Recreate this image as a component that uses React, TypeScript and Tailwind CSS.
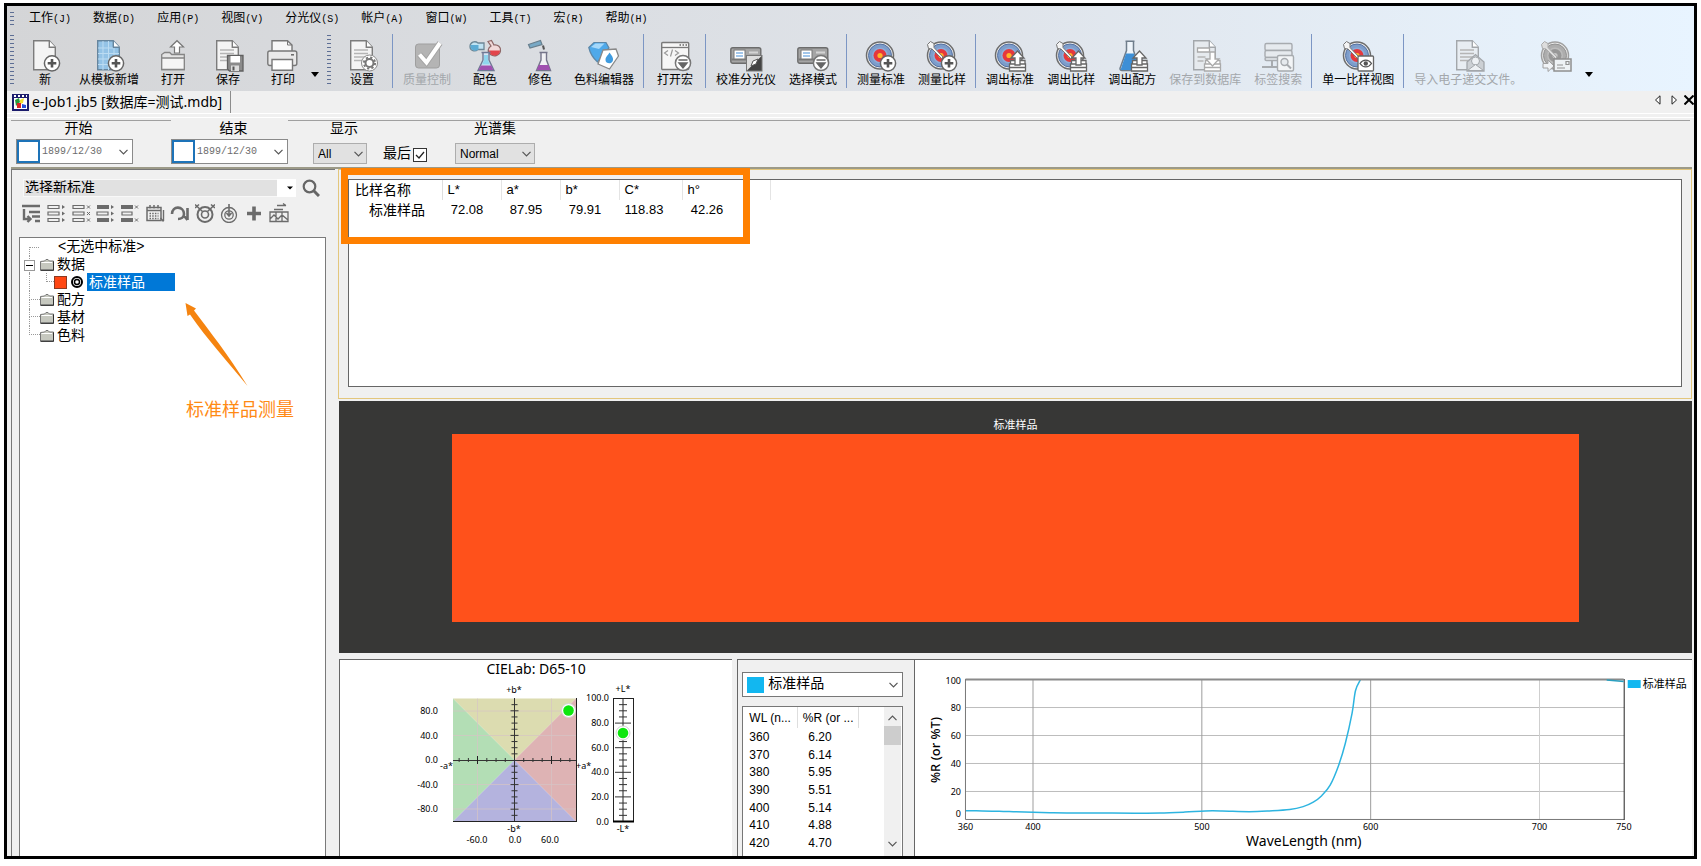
import { FC, Fragment, ReactNode, useState } from "react";

interface ToolItem {
	label: string;
	icon: ReactNode;
	disabled?: boolean;
}

const MENU_ITEMS: { text: string; hotkey: string }[] = [
	{ text: "工作", hotkey: "J" },
	{ text: "数据", hotkey: "D" },
	{ text: "应用", hotkey: "P" },
	{ text: "视图", hotkey: "V" },
	{ text: "分光仪", hotkey: "S" },
	{ text: "帐户", hotkey: "A" },
	{ text: "窗口", hotkey: "W" },
	{ text: "工具", hotkey: "T" },
	{ text: "宏", hotkey: "R" },
	{ text: "帮助", hotkey: "H" },
];

const LAB_COLUMNS = [
	{ name: "L*", value: "72.08", width: "w-[59px]" },
	{ name: "a*", value: "87.95", width: "w-[59px]" },
	{ name: "b*", value: "79.91", width: "w-[59px]" },
	{ name: "C*", value: "118.83", width: "w-[63px]" },
	{ name: "h°", value: "42.26", width: "w-[88px]" },
];

const SPECTRUM_ROWS = [
	["360", "6.20"],
	["370", "6.14"],
	["380", "5.95"],
	["390", "5.51"],
	["400", "5.14"],
	["410", "4.88"],
	["420", "4.70"],
];

// [wavelength, reflectance]
const CURVE: [number, number][] = [
	[360, 6.2],
	[370, 6.14],
	[380, 5.95],
	[390, 5.51],
	[400, 5.14],
	[410, 4.88],
	[420, 4.7],
	[440, 4.6],
	[460, 4.5],
	[475, 4.6],
	[490, 5.3],
	[502, 6.1],
	[512, 6.1],
	[528, 5.6],
	[540, 6.1],
	[552, 7.1],
	[560, 9.2],
	[566, 12.4],
	[571, 17],
	[576, 24.5],
	[581, 38.6],
	[585, 54.5],
	[589, 76],
	[591, 92],
	[594, 100],
];

/* ---------- icon pieces ---------- */

const Icon: FC<{ children: ReactNode }> = ({ children }) => (
	<svg
		viewBox="0 0 32 32"
		className="w-8 h-8 overflow-visible"
		fill="none"
		aria-hidden="true"
	>
		{children}
	</svg>
);

const Doc: FC<{ fill?: string; stroke?: string }> = ({
	fill = "#f4f4f4",
	stroke = "#7c7c7c",
}) => (
	<g stroke={stroke} strokeWidth="1.4">
		<path d="M4.7 .7h15.6l6 6.5v22.5H4.7z" fill={fill} />
		<path d="M20.3 .7v6.5h6" fill="#fff" />
	</g>
);

const DocLines: FC = () => (
	<path d="M8 10h14M8 13.500h14M8 17h14M8 20.500h10" stroke="#b5b5b5" strokeWidth="1.5" />
);

const PlusBadge: FC = () => (
	<g>
		<circle cx="23" cy="23.300" r="7.600" fill="#fff" stroke="#666" strokeWidth="1.500" />
		<path d="M23 19v8.600M18.700 23.300h8.600" stroke="#555" strokeWidth="2.600" />
	</g>
);

const ModeBadge: FC = () => (
	<g>
		<circle cx="24" cy="23" r="7.600" fill="#fff" stroke="#777" strokeWidth="1.500" />
		<path d="M19.500 20h9M20 23l4 4.800 4-4.800z" stroke="#666" strokeWidth="1.400" fill="#666" />
	</g>
);

const Target: FC<{ gray?: boolean }> = ({ gray }) => (
	<g>
		<circle cx="15" cy="15.500" r="13.500" fill="#eee" stroke={gray ? "#a0a0a0" : "#6d6d6d"} strokeWidth="1.500" />
		<circle cx="15" cy="15.500" r="11.500" fill={gray ? "#adadad" : "#7d9dcb"} stroke={gray ? "#919191" : "#5470a0"} />
		<circle cx="15" cy="15.500" r="8" fill={gray ? "#bcbcbc" : "#8eacd8"} />
		<circle cx="15" cy="15.500" r="6.500" fill={gray ? "#979797" : "#e5383d"} />
		<circle cx="15" cy="15.500" r="2.600" fill={gray ? "#c8c8c8" : "#ffb429"} />
	</g>
);

const Dart: FC<{ gray?: boolean }> = ({ gray }) => (
	<g>
		<path
			d="M1.500 4.500 4.500 1.500l3.500 2v4l9 9.500-1.500 1.500-9.500-9.500-3.500-.5z"
			fill={gray ? "#ddd" : "#f4f4f4"}
			stroke={gray ? "#aaa" : "#777"}
		/>
	</g>
);

const RecallBadge: FC<{ gray?: boolean; down?: boolean }> = ({ gray, down }) => (
	<g fill="#fff" stroke={gray ? "#aaa" : "#666"} strokeWidth="1.300">
		<path d="M15.500 27.500h16v3.500h-16zM15.500 24h16v3.500h-16zM16.500 20.500h14.500V24H16.500z" />
		{down ? (
			<path d="M21 12h5v7h4l-6.500 7-6.500-7h4z" />
		) : (
			<path d="M21 25v-7h-4l6.500-7 6.500 7h-4v7z" />
		)}
	</g>
);

const Device: FC = () => (
	<g>
		<rect x=".8" y="7.800" width="30" height="15.500" rx="2" fill="#a5a5a5" stroke="#6c6c6c" strokeWidth="1.400" />
		<path d="M1.500 19.500h28.500" stroke="#7a7a7a" strokeWidth="2" />
		<rect x="4" y="10" width="11" height="9" fill="#fff" stroke="#777" />
		<path d="M6 13h7M6 16h7" stroke="#84b4e4" strokeWidth="1.400" />
		<path d="M19 12.500h9" stroke="#d4d4d4" strokeWidth="2" />
	</g>
);

const NewIcon = (
	<Icon>
		<Doc />
		<PlusBadge />
	</Icon>
);

const TemplateIcon = (
	<Icon>
		<Doc fill="#94c3e6" stroke="#66859d" />
		<path d="M5 8h15M5 13.500h21M5 19h21M5 24.500h21M10 1v29M15.500 1v29M21 8v22" stroke="#bcdcf2" strokeWidth="1" />
		<PlusBadge />
	</Icon>
);

const OpenIcon = (
	<Icon>
		<path d="M4.700 29.500V14.500l3-2h5l2 2h12.600v15z" fill="#e4e4e4" stroke="#858585" strokeWidth="1.300" />
		<path d="M4.700 29.500V18h22.600v11.500z" fill="#f5f5f5" stroke="#858585" strokeWidth="1.300" />
		<path d="M17.500 13V7h-4l6.500-6.300L26.500 7h-4v6z" fill="#fff" stroke="#777" strokeWidth="1.200" />
	</Icon>
);

const SaveIcon = (
	<Icon>
		<Doc />
		<DocLines />
		<path d="M15.500 15.500h15.500v15.500H17.500l-2-2z" fill="#8b8b8b" stroke="#606060" strokeWidth="1.300" />
		<path d="M18.500 16h9.500v6.500h-9.500z" fill="#fff" />
		<path d="M19 25.500h8v5.500h-8z" fill="#ddd" />
		<path d="M20.500 26.500h2v4h-2z" fill="#555" />
	</Icon>
);

const PrintIcon = (
	<Icon>
		<path d="M5 11V.7h15.500L25 5v6" fill="#f7f7f7" stroke="#777" strokeWidth="1.400" />
		<path d="M20.500.7V5H25" stroke="#777" />
		<rect x=".8" y="11" width="29" height="14.500" rx="2" fill="#e9e9e9" stroke="#777" strokeWidth="1.400" />
		<path d="M24 14.800h3" stroke="#666" strokeWidth="1.500" />
		<path d="M5 19.500h20.500v10.800H5z" fill="#fff" stroke="#777" strokeWidth="1.400" />
	</Icon>
);

const SettingsIcon = (
	<Icon>
		<Doc />
		<DocLines />
		<circle cx="23.500" cy="23" r="8" fill="#fff" stroke="#888" />
		<circle cx="23.500" cy="23" r="4" fill="#fff" stroke="#777" strokeWidth="2" />
		<circle cx="23.500" cy="23" r="5.600" stroke="#777" strokeWidth="2" strokeDasharray="2.200 2.200" />
	</Icon>
);

const QualityIcon = (
	<Icon>
		<rect x="4.500" y="4" width="24" height="24" rx="3" fill="#b4b4b4" stroke="#9f9f9f" />
		<path d="M8.500 14.500l7 8L29 3" stroke="#a4a4a4" strokeWidth="6" />
		<path d="M8.500 14.500l7 8L29 3" stroke="#fff" strokeWidth="4" />
	</Icon>
);

const MatchIcon = (
	<Icon>
		<path d="M15 3H9C6 .5 1 2 1 6.500S6 12 9 9.500h6z" fill="#bfe3f3" stroke="#6d8796" strokeWidth="1.300" />
		<path d="M1.500 5h8v4.500C6 12 1 10.500 1.500 5z" fill="#5cabd4" />
		<path d="M19 1.500l3.500-1 2.500 4.500c4-.5 7 2 6.500 6s-6 6.500-10 3.500-2-7 .5-8.500z" fill="#f2d9d9" stroke="#8d6666" strokeWidth="1.200" />
		<path d="M20 10.500h11c0 3-2.500 5-5.500 5S20 13.500 20 10.500z" fill="#e2444a" />
		<path d="M12.500 12.500h9M14 13v7L9 30.500h16L20 20v-7" fill="#d9e4f4" stroke="#707894" strokeWidth="1.400" />
		<path d="M11.800 25.500h10.500l2 4.500H9.700z" fill="#a04fb0" />
		<path d="M15 15h4v5l2 4.500h-8l2-4.500z" fill="#8fd4ee" />
	</Icon>
);

const CorrectIcon = (
	<Icon>
		<path d="M4.500 4.500l12-4 1.500 4-12 3.500z" fill="#78a9c6" stroke="#687f8d" strokeWidth="1.200" />
		<path d="M19 5.500l1 4" stroke="#555" strokeWidth="2" />
		<path d="M15.500 12.500h8M17 13v7l-4.500 10.500h14L22.500 20v-7" fill="#f1f1f5" stroke="#74748a" strokeWidth="1.400" />
		<path d="M14.700 25h9.800l1.700 5H13z" fill="#a04fb0" />
	</Icon>
);

const ColorantIcon = (
	<Icon>
		<path d="M.8 7.500L6 2.500h12L21 8 9.500 22C5 18 2 13 .8 7.500z" fill="#4fa9ea" stroke="#5c87a8" strokeWidth="1.200" />
		<path d="M3 7l4.500-3.500h9L11 9z" fill="#a5d8fa" />
		<path d="M15 10l13-1 2.500 7-9 13-11.500-5z" fill="#fff" stroke="#888" strokeWidth="1.300" />
		<path d="M21.500 12.500c3 4 4.500 6 3 9s-7 2-7-1.500 2.500-4.500 4-7.500z" fill="#3f9bdf" />
	</Icon>
);

const MacroIcon = (
	<Icon>
		<rect x="2.700" y="2.500" width="27" height="27" rx="1" fill="#f6f6f6" stroke="#7a7a7a" strokeWidth="1.400" />
		<path d="M3 7.500h26.500" stroke="#7a7a7a" strokeWidth="1.300" />
		<path d="M20.500 5h1.500M23.500 5h1.500M26.500 5h1.500" stroke="#666" strokeWidth="1.500" />
		<path d="M9 10.500l-3.500 2.500L9 15.500M13.500 9.500l-2 7M16 10.500l3.500 2.500-3.500 2.500" stroke="#999" strokeWidth="1.200" />
		<ModeBadge />
	</Icon>
);

const CalibrateIcon = (
	<Icon>
		<Device />
		<rect x="16.500" y="15.500" width="15.500" height="15.500" fill="#444" stroke="#777" />
		<path d="M17 16h14.500L17 30.500z" fill="#ddd" />
		<path d="M21 26l2-5 5-2-2 5z" fill="#fff" stroke="#555" />
	</Icon>
);

const ModeIcon = (
	<Icon>
		<Device />
		<ModeBadge />
	</Icon>
);

const RecallFormulaIcon = (
	<Icon>
		<path d="M9.500 1.200h9M10.500 1.500v9L4 28.500c0 1.500 1 2 2 2h16c1.500 0 2-1 1.500-2l-6-18v-9" fill="#eef4fa" stroke="#6f7d8b" strokeWidth="1.500" />
		<path d="M10 13.500h8l5 15.500c0 .8-.5 1-1 1H6c-1 0-1.500-.5-1-1.500z" fill="#3d8fd6" />
		<RecallBadge />
	</Icon>
);

const SaveDbIcon = (
	<Icon>
		<Doc fill="#e6eaee" stroke="#a3a7ab" />
		<path d="M8.500 8h12v4h-12z" fill="#fff" stroke="#a9a9a9" strokeWidth="1.300" />
		<path d="M8.500 17h8M8.500 21h6" stroke="#b5b5b5" strokeWidth="1.300" />
		<RecallBadge gray down />
	</Icon>
);

const TagSearchIcon = (
	<Icon>
		<g fill="#e6eaee" stroke="#a7abaf" strokeWidth="1.400">
			<rect x="3" y="3.500" width="27" height="7" rx="1.500" />
			<rect x="3" y="10.500" width="27" height="7" rx="1.500" />
			<rect x="3" y="17.500" width="27" height="3" rx="1.500" />
			<path d="M10 20.500v5.500M0 27h16" strokeWidth="2" />
			<rect x="15.500" y="15.500" width="16" height="15.500" rx="1.500" fill="#f3f5f7" />
			<circle cx="22.500" cy="22" r="3.500" />
			<path d="M25 24.500l4 4" strokeWidth="2" />
		</g>
	</Icon>
);

const SingleViewIcon = (
	<Icon>
		<Target />
		<Dart />
		<rect x="16" y="16" width="15.500" height="15" rx="1" fill="#fff" stroke="#666" strokeWidth="1.300" />
		<path d="M18 23.500c3-4.500 8.500-4.500 11.500 0-3 4.500-8.500 4.500-11.500 0z" stroke="#555" strokeWidth="1.300" />
		<circle cx="23.800" cy="23.500" r="2.200" fill="#555" />
	</Icon>
);

const ImportIcon = (
	<Icon>
		<Doc fill="#e8edf2" stroke="#a3a7ab" />
		<DocLines />
		<path d="M15 22l8.500-7.500 8.500 7.500v9H15z" fill="#ccd0d4" stroke="#a3a7ab" strokeWidth="1.300" />
		<circle cx="23.500" cy="21" r="4" fill="#eef1f4" stroke="#a3a7ab" />
		<path d="M15.500 30.500l8-6 8 6z" fill="#eef1f4" stroke="#a3a7ab" />
	</Icon>
);

const MailIcon = (
	<Icon>
		<Target gray />
		<Dart gray />
		<path d="M3 23.500h5V20l6 6-6 5.500V28H3z" fill="#f0f3f6" stroke="#a0a0a0" />
		<rect x="14" y="19" width="17" height="12" fill="#eef2f5" stroke="#8f8f8f" strokeWidth="1.500" />
		<path d="M17 25h6M17 28h8M26 21.500h3v3h-3z" stroke="#929292" strokeWidth="1.200" />
	</Icon>
);

const GROUP_FILE: ToolItem[] = [
	{ label: "新", icon: NewIcon },
	{ label: "从模板新增", icon: TemplateIcon },
	{ label: "打开", icon: OpenIcon },
	{ label: "保存", icon: SaveIcon },
	{ label: "打印", icon: PrintIcon },
];

const GROUPS: ToolItem[][] = [
	[{ label: "设置", icon: SettingsIcon }],
	[
		{ label: "质量控制", icon: QualityIcon, disabled: true },
		{ label: "配色", icon: MatchIcon },
		{ label: "修色", icon: CorrectIcon },
		{ label: "色料编辑器", icon: ColorantIcon },
	],
	[{ label: "打开宏", icon: MacroIcon }],
	[
		{ label: "校准分光仪", icon: CalibrateIcon },
		{ label: "选择模式", icon: ModeIcon },
	],
	[
		{ label: "测量标准", icon: <Icon><Target /><PlusBadge /></Icon> },
		{ label: "测量比样", icon: <Icon><Target /><Dart /><PlusBadge /></Icon> },
	],
	[
		{ label: "调出标准", icon: <Icon><Target /><RecallBadge /></Icon> },
		{ label: "调出比样", icon: <Icon><Target /><Dart /><RecallBadge /></Icon> },
		{ label: "调出配方", icon: RecallFormulaIcon },
		{ label: "保存到数据库", icon: SaveDbIcon, disabled: true },
		{ label: "标签搜索", icon: TagSearchIcon, disabled: true },
	],
	[{ label: "单一比样视图", icon: SingleViewIcon }],
	[
		{ label: "导入电子递交文件。", icon: ImportIcon, disabled: true },
		{ label: "", icon: MailIcon, disabled: true },
	],
];

// Small gray icons above the tree
const TREE_TOOLS: { name: string; art: ReactNode }[] = [
	{
		name: "层级",
		art: (
			<path d="M1 3h18M8 9h11M11 13.500h8M14 18h5M3 6v10h6M6.500 13l3 3-3 3" strokeWidth="2.400" />
		),
	},
	{
		name: "展开",
		art: (
			<>
				<path d="M2 2.500h11v3H2zM2 9h11v3H2zM2 15.500h11v3H2z" strokeWidth="1.200" />
				<path d="M16 2l3 2-3 2zM16 8.500l3 2-3 2zM16 15l3 2-3 2z" fill="#6b6b6b" stroke="none" />
			</>
		),
	},
	{
		name: "清除",
		art: (
			<>
				<path d="M2 2.500h11v3H2zM2 9h11v3H2zM2 15.500h11v3H2z" strokeWidth="1.200" />
				<path d="M16 2.500l3 3m0-3l-3 3M16 9l3 3m0-3l-3 3M16 15.500l3 3m0-3l-3 3" strokeWidth="1" />
			</>
		),
	},
	{
		name: "选中展开",
		art: (
			<>
				<path d="M2 4h12M2 17h12" strokeWidth="4" />
				<path d="M2 9h11v3H2z" strokeWidth="1.200" />
				<path d="M16 2l3 2-3 2zM16 8.500l3 2-3 2zM16 15l3 2-3 2z" fill="#6b6b6b" stroke="none" />
			</>
		),
	},
	{
		name: "选中清除",
		art: (
			<>
				<path d="M1 4h12M1 17h12" strokeWidth="4" />
				<path d="M2 9h10v3H2z" strokeWidth="1.200" />
				<path d="M15 2.500l3 3m0-3l-3 3M15 15.500l3 3m0-3l-3 3" strokeWidth="1" />
			</>
		),
	},
	{
		name: "日期",
		art: (
			<>
				<path d="M2 4.500h14v13H2zM2 7.500h14M5 2v3.500M9 2v3.500M13 2v3.500" strokeWidth="1.500" />
				<path d="M4.500 10.500h9M4.500 13h9M4.500 15.500h9" strokeWidth="1.500" strokeDasharray="1.500 1.200" />
				<path d="M18.500 7v11M15.500 15l3 3.500" strokeWidth="1.400" />
			</>
		),
	},
	{
		name: "刷新",
		art: <path d="M2 11c0-9 12-8 12 0 0 3.500-3 5-6 5M17.500 5v12M14.500 13.500l3 3.500" strokeWidth="2.600" />,
	},
	{
		name: "目标",
		art: (
			<>
				<circle cx="10" cy="11.500" r="7.500" strokeWidth="2" />
				<circle cx="10" cy="11.500" r="3.500" strokeWidth="1.600" />
				<path d="M0 1.500l7.500 7M20 1.500l-7.500 7M0 5l4-3.500M20 5l-4-3.500" strokeWidth="1.600" />
			</>
		),
	},
	{
		name: "测量",
		art: (
			<>
				<circle cx="10" cy="12" r="7.500" strokeWidth="1.300" />
				<circle cx="10" cy="12" r="4.200" strokeWidth="1.300" />
				<path d="M10 1v12M7.500 10l2.500 3 2.500-3" strokeWidth="1.600" />
			</>
		),
	},
	{ name: "新增", art: <path d="M10 3.500v14M3 10.500h14" strokeWidth="3.600" /> },
	{
		name: "曲线",
		art: (
			<path d="M1 9h18v9.500H1zM1 16l4-4 4 4 4-4 6 5M7 9v9M13 9v9M5 6.500h9M8 2.500h9M14 .5l3 2" strokeWidth="1.300" />
		),
	},
];

/* ---------- shared bits ---------- */

const Chevron: FC<{ up?: boolean }> = ({ up }) => (
	<svg
		viewBox="0 0 9 6"
		className={`w-[9px] h-[6px] ${up ? "rotate-180" : ""}`}
		fill="none"
		aria-hidden="true"
	>
		<path d="M.5 .8l4 4 4-4" stroke="#555" strokeWidth="1.200" />
	</svg>
);

const Caret: FC = () => (
	<svg viewBox="0 0 8 5" className="w-2 h-[5px]" aria-hidden="true">
		<path d="M0 0h8L4 5z" fill="#000" />
	</svg>
);

const Grip: FC = () => (
	<div className="w-[4px] h-[50px] shrink-0 bg-[repeating-linear-gradient(to_bottom,#5d6e94_0px,#5d6e94_1px,transparent_1px,transparent_4px)]" />
);

const ToolButton: FC<{ item: ToolItem }> = ({ item }) => (
	<button
		type="button"
		disabled={item.disabled}
		aria-label={item.label || "邮件"}
		className={`min-w-[54px] px-[6px] flex flex-col items-center shrink-0 text-xs leading-4 whitespace-nowrap ${
			item.disabled ? "text-[#a3a7ab]" : "text-black"
		}`}
	>
		{item.icon}
		<span>{item.label}</span>
	</button>
);

const DateField: FC<{ label: string }> = ({ label }) => {
	const [enabled, setEnabled] = useState(false);
	const [value, setValue] = useState("1899/12/30");

	return (
		<div className="w-[117px] flex flex-col items-center gap-[3px]">
			<label htmlFor={label} className="pl-2 text-sm leading-[15px]">
				{label}
			</label>
			<div className="w-full h-[25px] flex items-center bg-white border border-[#8a8a8a] pr-1">
				<input
					type="checkbox"
					aria-label={`启用${label}`}
					checked={enabled}
					onChange={() => setEnabled(!enabled)}
					className="appearance-none w-[23px] h-[23px] shrink-0 bg-white border-2 border-[#1d73b8] checked:bg-[#1d73b8]"
				/>
				<input
					id={label}
					value={value}
					onChange={(e) => setValue(e.target.value)}
					className="min-w-0 flex-1 pl-[2px] text-[10px] font-['Liberation_Mono',monospace] text-[#6d6d6d]"
				/>
				<Chevron />
			</div>
		</div>
	);
};

const SmallSelect: FC<{ id: string; options: string[]; width: string }> = ({
	id,
	options,
	width,
}) => (
	<div className={`relative h-[21px] ${width}`}>
		<select
			id={id}
			className="appearance-none block w-full h-full pl-1 bg-[#e1e1e1] border border-[#adadad] text-xs leading-4 font-['Liberation_Sans',sans-serif]"
		>
			{options.map((option) => (
				<option key={option}>{option}</option>
			))}
		</select>
		<span className="absolute right-[4px] top-[8px] flex pointer-events-none">
			<Chevron />
		</span>
	</div>
);

/* ---------- page sections ---------- */

const Header: FC = () => (
	<header className="bg-linear-to-r from-[#d4d5d7] via-[#dfe3e9] via-55% to-[#e8f4ff] overflow-hidden">
		<nav className="h-[26px] pl-[3px] flex items-center text-xs leading-4">
			<div className="w-[4px] h-[14px] mr-[15px] bg-[repeating-linear-gradient(to_bottom,#5d6e94_0px,#5d6e94_1px,transparent_1px,transparent_4px)]" />
			<div className="flex gap-[22px]">
				{MENU_ITEMS.map((item) => (
					<button key={item.hotkey} type="button" className="flex items-baseline whitespace-nowrap">
						{item.text}
						<span className="text-[10px] font-['Liberation_Mono',monospace]">({item.hotkey})</span>
					</button>
				))}
			</div>
		</nav>
		<div className="h-[59px] pl-[3px] flex items-start">
			<div className="pt-[3px] pr-[4px]">
				<Grip />
			</div>
			<div className="pt-2 flex gap-px">
				{GROUP_FILE.map((item) => (
					<ToolButton key={item.label} item={item} />
				))}
			</div>
			<button type="button" aria-label="更多" className="pt-[40px] pl-px pr-2">
				<Caret />
			</button>
			<div className="pt-[3px] pr-[4px]">
				<Grip />
			</div>
			{GROUPS.map((group, index) => (
				<Fragment key={index}>
					{index > 0 && <div className="w-px h-[54px] mt-[2px] ml-[3px] mr-1 shrink-0 bg-[#7c96c4]" />}
					<div className="pt-2 flex gap-px">
						{group.map((item) => (
							<ToolButton key={item.label} item={item} />
						))}
					</div>
				</Fragment>
			))}
			<button type="button" aria-label="更多" className="pt-[40px] pl-[2px]">
				<Caret />
			</button>
		</div>
	</header>
);

const TabStrip: FC = () => (
	<div className="h-[22px] flex items-center justify-between">
		<div className="h-full pl-[5px] pr-2 flex items-center gap-[3px] border-r border-[#8c8c8c]">
			<svg viewBox="0 0 17 17" className="w-[17px] h-[17px]" aria-hidden="true">
				<path d="M0 0h17v17H0z" fill="#1c1c6c" />
				<path d="M2 4h13v11H2z" fill="#fff" />
				<path d="M2 2h2M6 2h2M10 2h2M14 2h1" stroke="#fff" strokeWidth="2" />
				<path d="M3 6l4-2 1 4-4 4z" fill="#2a9a3b" />
				<path d="M8 6l4-2-1 5-3 1z" fill="#f4e02e" />
				<path d="M5 9h4v5H5z" fill="#d92525" />
				<path d="M10 10l4 1v3h-4z" fill="#2750d8" />
			</svg>
			<span className="text-sm leading-5 whitespace-nowrap font-['Noto_Sans','Noto_Sans_CJK_SC',sans-serif]">
				e-Job1.jb5 [数据库=测试.mdb]
			</span>
		</div>
		<div className="h-full flex items-start pt-1">
			<button type="button" aria-label="上一个" className="w-4">
				<svg viewBox="0 0 8 10" className="w-2 h-[10px]">
					<path d="M6 .8v8.400L1.500 5z" fill="#fff" stroke="#222" />
				</svg>
			</button>
			<button type="button" aria-label="下一个" className="w-[14px]">
				<svg viewBox="0 0 8 10" className="w-2 h-[10px]">
					<path d="M2 .8v8.400L6.500 5z" fill="#fff" stroke="#222" />
				</svg>
			</button>
			<button type="button" aria-label="关闭">
				<svg viewBox="0 0 10 10" className="w-[10px] h-[10px]">
					<path d="M.5 .5l9 9M9.500 .5l-9 9" stroke="#000" strokeWidth="2" />
				</svg>
			</button>
		</div>
	</div>
);

const FilterBar: FC = () => {
	const [latest, setLatest] = useState(true);

	return (
		<div className="mx-[4px] h-[47px] flex">
			<div className="w-[160px] pl-[5px] border-t border-[#a0a0a0]">
				<DateField label="开始" />
			</div>
			<div className="w-[117px] border-t border-transparent">
				<DateField label="结束" />
			</div>
			<div className="flex-1 pl-[25px] flex border-t border-[#a0a0a0]">
				<div className="flex flex-col items-center gap-[7px]">
					<label htmlFor="show" className="pl-2 text-sm leading-[15px]">
						显示
					</label>
					<SmallSelect id="show" options={["All", "None"]} width="w-[54px]" />
				</div>
				<div className="ml-4 pt-[23px] flex items-start gap-[2px] text-sm leading-[18px]">
					<label htmlFor="latest">最后</label>
					<div className="relative mt-[4px] w-[14px] h-[14px]">
						<input
							id="latest"
							type="checkbox"
							checked={latest}
							onChange={() => setLatest(!latest)}
							className="appearance-none block w-[14px] h-[14px] bg-white border border-[#333]"
						/>
						{latest && (
							<svg viewBox="0 0 14 14" className="absolute inset-0 pointer-events-none" fill="none">
								<path d="M3 7l3 3 5-6" stroke="#222" strokeWidth="1.300" />
							</svg>
						)}
					</div>
				</div>
				<div className="ml-[28px] flex flex-col items-center gap-[7px]">
					<label htmlFor="spectrum-set" className="text-sm leading-[15px]">
						光谱集
					</label>
					<SmallSelect id="spectrum-set" options={["Normal", "All"]} width="w-[80px]" />
				</div>
			</div>
		</div>
	);
};

const Folder: FC = () => (
	<svg viewBox="0 0 14 13" className="w-[14px] h-[13px]" aria-hidden="true">
		<path d="M.5 12V3.500L4.500 3 6 1.500h2L9.500 3h4v9z" fill="#c6c8bf" stroke="#777" />
		<path d="M1.500 4.500h10.500" stroke="#fff" />
		<path d="M.5 12.300h13.200V3.500" fill="none" stroke="#222" />
	</svg>
);

const TreeFolder: FC<{ label: string; last?: boolean }> = ({ label, last }) => (
	<li className="flex items-center">
		<span className="w-[9px]" />
		<span className="w-[11px] h-full flex flex-col">
			<span className="h-1/2 border-l border-b border-dotted border-[#999]" />
			<span className={last ? "h-1/2" : "h-1/2 border-l border-dotted border-[#999]"} />
		</span>
		<Folder />
		<span className="pl-[3px]">{label}</span>
	</li>
);

const StandardTree: FC = () => (
	<div className="relative flex-1 mt-[14px] bg-white border border-b-0 border-[#7a7a7a] text-sm leading-[17px]">
		<ul className="h-[106px] grid grid-rows-6">
			<li className="flex items-center">
				<span className="w-[9px]" />
				<span className="w-[29px] h-full flex flex-col justify-end">
					<span className="w-[10px] h-1/2 border-l border-t border-dotted border-[#999]" />
				</span>
				<span>&lt;无选中标准&gt;</span>
			</li>
			<li className="relative flex items-center">
				<span className="w-[9px]" />
				<span className="w-[11px] h-full border-l border-dotted border-[#999]" />
				<button
					type="button"
					aria-label="折叠"
					className="absolute left-[4px] top-[4px] w-[11px] h-[11px] flex items-center justify-center bg-white border border-[#999]"
				>
					<span className="w-[7px] h-px bg-black" />
				</button>
				<Folder />
				<span className="pl-[3px]">数据</span>
			</li>
			<li className="flex items-center">
				<span className="w-[9px]" />
				<span className="w-[17px] h-full border-l border-dotted border-[#999]" />
				<span className="w-[8px] h-full">
					<span className="block h-1/2 border-l border-b border-dotted border-[#999]" />
				</span>
				<span className="w-[13px] h-[13px] bg-[#ff4713] border border-[#8c3a22]" />
				<svg viewBox="0 0 12 12" className="w-3 h-3 ml-[4px]" fill="none" aria-hidden="true">
					<circle cx="6" cy="6" r="5" stroke="#000" strokeWidth="2" />
					<circle cx="6" cy="6" r="2.500" stroke="#000" strokeWidth="1.400" />
				</svg>
				<button type="button" className="w-[88px] h-[18px] ml-[4px] pl-[2px] text-left bg-[#0078d7] text-white">
					标准样品
				</button>
			</li>
			<TreeFolder label="配方" />
			<TreeFolder label="基材" />
			<TreeFolder label="色料" last />
		</ul>
		{/* callout */}
		<svg viewBox="0 0 66 86" className="absolute left-[164px] top-[64px] w-[66px] h-[86px]" aria-hidden="true">
			<path d="M1.500 1l10.500 5.500-2 2C26 30 44 52 63.500 84 44 60 22 36 6 12.500l-2.500 1.500z" fill="#f58410" />
		</svg>
		<p className="absolute left-[166px] top-[160px] text-lg leading-6 text-[#ff8a14] whitespace-nowrap">
			标准样品测量
		</p>
	</div>
);

const SidePanel: FC = () => (
	<aside className="w-[324px] shrink-0 pl-[7px] pr-[9px] flex flex-col border-l border-t border-[#777]">
		<div className="pt-[9px] pl-[4px] flex items-center">
			<div className="relative w-[273px] h-[18px]">
				<select
					aria-label="选择新标准"
					className="appearance-none block w-full h-full pb-[3px] pl-px text-sm leading-[14px] bg-[#e1e1e1] border border-[#f8f8f8]"
				>
					<option>选择新标准</option>
				</select>
				<span className="absolute right-0 top-0 w-[19px] h-full flex items-center justify-end pr-[3px] bg-white pointer-events-none">
					<svg viewBox="0 0 6 4" className="w-[6px] h-1">
						<path d="M0 .5h6l-3 3z" fill="#000" />
					</svg>
				</span>
			</div>
			<button type="button" aria-label="搜索" className="ml-[6px]">
				<svg viewBox="0 0 18 18" className="w-[18px] h-[18px]" fill="none" stroke="#666">
					<circle cx="7.500" cy="7.500" r="5.800" strokeWidth="2.200" />
					<path d="M11.500 11.500l5.500 5.500" strokeWidth="3" />
				</svg>
			</button>
		</div>
		<div className="w-[268px] ml-[2px] mt-[6px] flex justify-between">
			{TREE_TOOLS.map((tool) => (
				<button key={tool.name} type="button" aria-label={tool.name}>
					<svg viewBox="0 0 20 20" className="w-5 h-5" fill="none" stroke="#6b6b6b">
						{tool.art}
					</svg>
				</button>
			))}
		</div>
		<StandardTree />
	</aside>
);

const TrialList: FC = () => (
	<section className="relative flex-208 pt-[9px] px-[9px] pb-[11px] border border-[#e3c67c]">
		<div className="h-full bg-white border border-[#666]">
			<table className="text-[13px] leading-4 text-left table-fixed w-[421px]">
				<thead>
					<tr className="h-[20px]">
						<th className="w-[93px] pl-[6px] font-normal text-sm leading-4 border-r border-[#dedede]">比样名称</th>
						{LAB_COLUMNS.map((column) => (
							<th
								key={column.name}
								className={`pl-[5px] font-normal border-r border-[#e4e4e4] ${column.width}`}
							>
								{column.name}
							</th>
						))}
					</tr>
				</thead>
				<tbody>
					<tr className="h-[20px]">
						<td className="pl-5 text-sm leading-4">标准样品</td>
						{LAB_COLUMNS.map((column) => (
							<td key={column.name}>
								<div className="w-[50px] text-center">{column.value}</div>
							</td>
						))}
					</tr>
				</tbody>
			</table>
		</div>
		<div className="absolute left-[2px] -top-[2px] w-[409px] h-[76px] border-7 border-[#ff8000] pointer-events-none" />
	</section>
);

const ColorPreview: FC = () => (
	<section className="flex-221 ml-px mt-[2px] px-[8.333%] pb-[31px] flex flex-col bg-[#373736]">
		<h2 className="h-[33px] pt-[16px] text-center text-[11px] leading-4 text-white">标准样品</h2>
		<div className="flex-1 bg-[#ff511b]" />
	</section>
);

const LabPlot: FC = () => {
	const cx = 98.5;
	const cy = 77;
	const unit = 0.615;
	const minor = [-90, -80, -70, -60, -50, -40, -30, -20, -10, 10, 20, 30, 40, 50, 60, 70, 80, 90];
	const minorA = [-90, -75, -45, -30, -15, 15, 30, 45, 75, 90];
	const lightness = Array.from({ length: 19 }, (_, i) => (i + 1) * 5);

	return (
		<section className="flex-393 mr-[5px] flex flex-col items-center bg-white border-l border-t border-[#666] font-['Noto_Sans',sans-serif]">
			<h2 className="text-sm leading-[18px] h-[23px]">CIELab: D65-10</h2>
			<svg viewBox="0 0 240 168" className="w-[240px] h-[168px] overflow-visible text-[9px]" fill="#000">
				<path d="M37 15.500h123L98.500 77z" fill="#dcdcb0" />
				<path d="M37 15.500v123L98.500 77z" fill="#b3deb5" />
				<path d="M160 15.500v123L98.500 77z" fill="#deb3b4" />
				<path d="M37 138.500h123L98.500 77z" fill="#b4b3de" />
				<path
					d="M61.500 15.500v123M135.500 15.500v123M37 28h123M37 52.500h123M37 101.500h123M37 126h123"
					stroke="#d5c5c5"
					strokeOpacity=".7"
				/>
				<path d="M98.500 15v124M37 77.500h123.500" stroke="#333" strokeWidth="1" />
				<path d="M160.500 15v124M37 138.500h124" stroke="#222" fill="none" />
				{minor.map((v) => {
					const half = v % 40 === 0 ? 4 : 3;
					return (
						<path key={v} d={`M${cx - half} ${cy - v * unit}h${half * 2}`} stroke="#333" />
					);
				})}
				{minorA.map((v) => (
					<path key={v} d={`M${cx + v * unit} ${cy - 2}v4`} stroke="#333" />
				))}
				<path d="M61.500 73v8M135.500 73v8" stroke="#222" />
				<circle cx="152.500" cy="27.500" r="7" fill="#fff" stroke="#d4d4d4" />
				<circle cx="152.500" cy="27.500" r="5.300" fill="#0de60d" />

				<rect x="197.500" y="15.500" width="20" height="123" fill="#fff" stroke="#222" />
				<path d="M197 138.500h21" stroke="#000" strokeWidth="2" />
				<path d="M207 15v123" stroke="#222" />
				{lightness.map((v) => {
					const half = v % 20 === 0 ? 8 : 4;
					return (
						<path key={v} d={`M${207 - half} ${138.5 - v * 1.23}h${half * 2}`} stroke="#333" />
					);
				})}
				<circle cx="207" cy="50" r="7" fill="#fff" stroke="#d4d4d4" />
				<circle cx="207" cy="50" r="5.300" fill="#0de60d" />

				<g textAnchor="end">
					<text x="22" y="31">80.0</text>
					<text x="22" y="56">40.0</text>
					<text x="22" y="80">0.0</text>
					<text x="22" y="105">-40.0</text>
					<text x="22" y="129">-80.0</text>
					<text x="193" y="18">100.0</text>
					<text x="193" y="43">80.0</text>
					<text x="193" y="68">60.0</text>
					<text x="193" y="92">40.0</text>
					<text x="193" y="117">20.0</text>
					<text x="193" y="142">0.0</text>
					<text x="37" y="86">-a*</text>
				</g>
				<g textAnchor="middle">
					<text x="98" y="10">+b*</text>
					<text x="98" y="149">-b*</text>
					<text x="207" y="9">+L*</text>
					<text x="207" y="149">-L*</text>
					<text x="61" y="160">-60.0</text>
					<text x="99" y="160">0.0</text>
					<text x="134" y="160">60.0</text>
				</g>
				<text x="160" y="86">+a*</text>
			</svg>
		</section>
	);
};

const SpectrumTable: FC = () => (
	<section className="w-[177px] shrink-0 pl-[4px] pr-[11px] flex flex-col border-l border-t border-[#666]">
		<div className="relative mt-3 h-[25px] flex items-center bg-white border border-[#777]">
			<span className="absolute left-[4px] w-[17px] h-[16px] bg-[#12b7f0] pointer-events-none" />
			<select aria-label="样品" className="appearance-none block w-full h-full pb-[3px] pl-[25px] text-sm leading-4">
				<option>标准样品</option>
			</select>
			<span className="absolute right-[4px] flex pointer-events-none">
				<Chevron />
			</span>
		</div>
		<div className="mt-[9px] flex-1 flex justify-between bg-white border border-b-0 border-[#777]">
			<table className="w-[116px] h-[145px] table-fixed text-xs leading-4 text-left">
				<thead>
					<tr className="h-[21px]">
						<th className="w-[54px] pl-[6px] font-normal whitespace-nowrap border-r border-[#dedede]">WL (n...</th>
						<th className="pl-[5px] font-normal whitespace-nowrap border-r border-[#dedede]">%R (or ...</th>
					</tr>
				</thead>
				<tbody>
					{SPECTRUM_ROWS.map(([wavelength, value]) => (
						<tr key={wavelength}>
							<td className="pl-[6px]">{wavelength}</td>
							<td className="pl-[11px]">{value}</td>
						</tr>
					))}
				</tbody>
			</table>
			<div className="w-[17px] mr-px pt-[8px] pb-[9px] flex flex-col items-center bg-[#f0f0f0]">
				<Chevron up />
				<div className="w-full h-[19px] mt-[5px] bg-[#cdcdcd]" />
				<div className="flex-1" />
				<Chevron />
			</div>
		</div>
	</section>
);

const SpectrumPlot: FC = () => {
	const toX = (nm: number) => 50.5 + (nm - 360) * 1.689;
	const toY = (value: number) => 160.5 - value * 1.4;
	const points = CURVE.map(([nm, value]) => [toX(nm), toY(value)]);

	// Catmull-Rom through the measured points
	const line = points.reduce((path, [x, y], i) => {
		if (i === 0) return `M${x} ${y}`;
		const before = points[Math.max(i - 2, 0)]!;
		const from = points[i - 1]!;
		const after = points[Math.min(i + 1, points.length - 1)]!;
		const c1 = `${from[0]! + (x! - before[0]!) / 6} ${from[1]! + (y! - before[1]!) / 6}`;
		const c2 = `${x! - (after[0]! - from[0]!) / 6} ${y! - (after[1]! - from[1]!) / 6}`;
		return `${path}C${c1} ${c2} ${x} ${y}`;
	}, "");

	return (
		<section className="flex-778 bg-white border-l border-t border-[#666]">
			<svg
				viewBox="0 1 777 196"
				className="w-full h-full text-[9px] font-['Noto_Sans','Noto_Sans_CJK_SC',sans-serif]"
				fill="#000"
			>
				{[20, 40, 60, 80].map((v) => (
					<path key={v} d={`M50.500 ${toY(v)}H709.500`} stroke="#bdbdbd" />
				))}
				{[400, 500, 600, 700].map((nm) => (
					<path key={nm} d={`M${toX(nm)} 20V160`} stroke={nm === 700 ? "#cfcfcf" : "#9d9d9d"} />
				))}
				<path d={line} stroke="#2db4e0" strokeWidth="1.500" fill="none" strokeLinejoin="round" />
				<path d="M50.500 20.500H709" stroke="#8a8a8a" strokeWidth="2" />
				<path d="M50.500 20v140.500H709.500" stroke="#777" fill="none" />
				<path d="M709.500 20v141" stroke="#222" />
				<path d="M692 21l17 1.500" stroke="#2b9fbf" strokeWidth="1.500" />
				<g textAnchor="end">
					<text x="46" y="25">100</text>
					<text x="46" y="52">80</text>
					<text x="46" y="80">60</text>
					<text x="46" y="108">40</text>
					<text x="46" y="136">20</text>
					<text x="46" y="158">0</text>
				</g>
				<g textAnchor="middle">
					{[360, 400, 500, 600, 700, 750].map((nm) => (
						<text key={nm} x={toX(nm)} y="171">
							{nm}
						</text>
					))}
					<text x="389" y="187" className="text-sm">
						WaveLength (nm)
					</text>
					<text transform="translate(25 91) rotate(-90)" className="text-[13px] font-medium">
						%R (or %T)
					</text>
				</g>
				<path d="M713 21h13v8h-13z" fill="#12b7f0" />
				<text x="728" y="29" className="text-[11px]">
					标准样品
				</text>
			</svg>
		</section>
	);
};

export default function App() {
	return (
		<div className="h-screen min-h-[720px] pt-[3px] pb-[7px] px-[4px] bg-white text-black font-['Liberation_Sans','Noto_Sans_CJK_SC',sans-serif]">
			<div className="h-full flex flex-col overflow-hidden bg-[#f0f0f0] border-3 border-black">
				<Header />
				<TabStrip />
				<div className="h-[7px] border-y border-t-white border-b-transparent">
					<div className="mt-[3px] h-px bg-white" />
				</div>
				<FilterBar />
				<main className="flex-1 min-h-0 mx-[4px] mr-[2px] flex gap-[3px] border-t-2 border-[#9c9a88]">
					<SidePanel />
					<div className="flex-1 min-w-0 flex flex-col">
						<TrialList />
						<ColorPreview />
						<div className="h-[197px] ml-px mt-[6px] shrink-0 flex">
							<LabPlot />
							<SpectrumTable />
							<SpectrumPlot />
						</div>
					</div>
				</main>
			</div>
		</div>
	);
}
